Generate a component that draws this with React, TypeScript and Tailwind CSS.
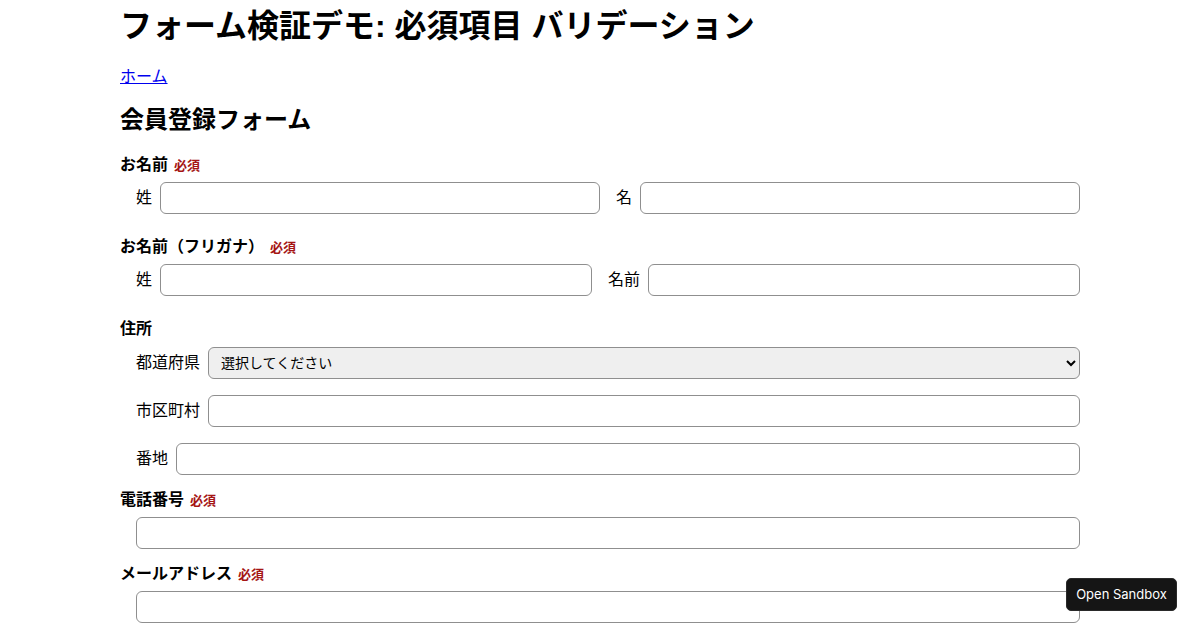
import React from "react";

const prefectures = ["北海道", "青森県", "岩手県", "宮城県", "東京都", "大阪府", "福岡県", "沖縄県"];

function Required() {
  return <span className="ml-[6px] text-[13px] leading-none text-[#a51515]">必須</span>;
}

function FieldLabel({ children, required }: { children: React.ReactNode; required?: boolean }) {
  return (
    <label className="flex h-[18px] items-center font-bold leading-none">
      {children}
      {required && <Required />}
    </label>
  );
}

function TextInput() {
  return (
    <input
      type="text"
      className="h-8 min-w-0 flex-1 rounded-md border border-[#8f8f8f] bg-white px-2 text-sm outline-none"
    />
  );
}

export default function App() {
  return (
    <div className="min-h-screen bg-white text-black font-['Liberation_Sans','Noto_Sans_CJK_JP',sans-serif]">
      <div className="mx-auto w-[960px] pt-2">
        <h1 className="mb-[23px] text-[32px] font-bold leading-[37px]">
          フォーム検証デモ: 必須項目 バリデーション
        </h1>
        <div className="mb-[20px] h-[18px] leading-[18px]">
          <a href="#" className="text-[#0000ee] underline">
            ホーム
          </a>
        </div>
        <h2 className="mb-[22px] h-[28px] text-[24px] font-bold leading-[28px]">会員登録フォーム</h2>

        <form onSubmit={(e) => e.preventDefault()}>
          {/* お名前 */}
          <div className="mb-6">
            <FieldLabel required>お名前</FieldLabel>
            <div className="mt-2 flex items-center gap-2 pl-4">
              <span className="leading-[18px]">姓</span>
              <TextInput />
              <span className="ml-2 leading-[18px]">名</span>
              <TextInput />
            </div>
          </div>

          {/* フリガナ */}
          <div className="mb-6">
            <FieldLabel required>お名前（フリガナ）</FieldLabel>
            <div className="mt-2 flex items-center gap-2 pl-4">
              <span className="leading-[18px]">姓</span>
              <TextInput />
              <span className="ml-2 leading-[18px]">名前</span>
              <TextInput />
            </div>
          </div>

          {/* 住所 */}
          <div className="mb-4">
            <FieldLabel>住所</FieldLabel>
            <div className="mt-[9px] flex flex-col gap-4 pl-4">
              <div className="flex items-center gap-2">
                <span className="leading-[18px]">都道府県</span>
                <select
                  defaultValue=""
                  className="h-8 min-w-0 flex-1 rounded-md border border-[#8f8f8f] bg-[#efefef] pl-[8px] text-sm"
                >
                  <option value="">選択してください</option>
                  {prefectures.map((p) => (
                    <option key={p} value={p}>
                      {p}
                    </option>
                  ))}
                </select>
              </div>
              <div className="flex items-center gap-2">
                <span className="leading-[18px]">市区町村</span>
                <TextInput />
              </div>
              <div className="flex items-center gap-2">
                <span className="leading-[18px]">番地</span>
                <TextInput />
              </div>
            </div>
          </div>

          {/* 電話番号 */}
          <div className="mb-4">
            <FieldLabel required>電話番号</FieldLabel>
            <div className="mt-2 flex pl-4">
              <TextInput />
            </div>
          </div>

          {/* メールアドレス */}
          <div className="mb-8">
            <FieldLabel required>メールアドレス</FieldLabel>
            <div className="mt-2 flex pl-4">
              <TextInput />
            </div>
          </div>
        </form>
      </div>

      <button className="fixed bottom-[19px] right-[23px] flex h-[33px] w-[111px] items-center justify-center rounded-[5px] border border-[#2a2a2a] bg-[#151515] text-[13px] text-white font-['Inter',sans-serif]">
        Open Sandbox
      </button>
    </div>
  );
}
